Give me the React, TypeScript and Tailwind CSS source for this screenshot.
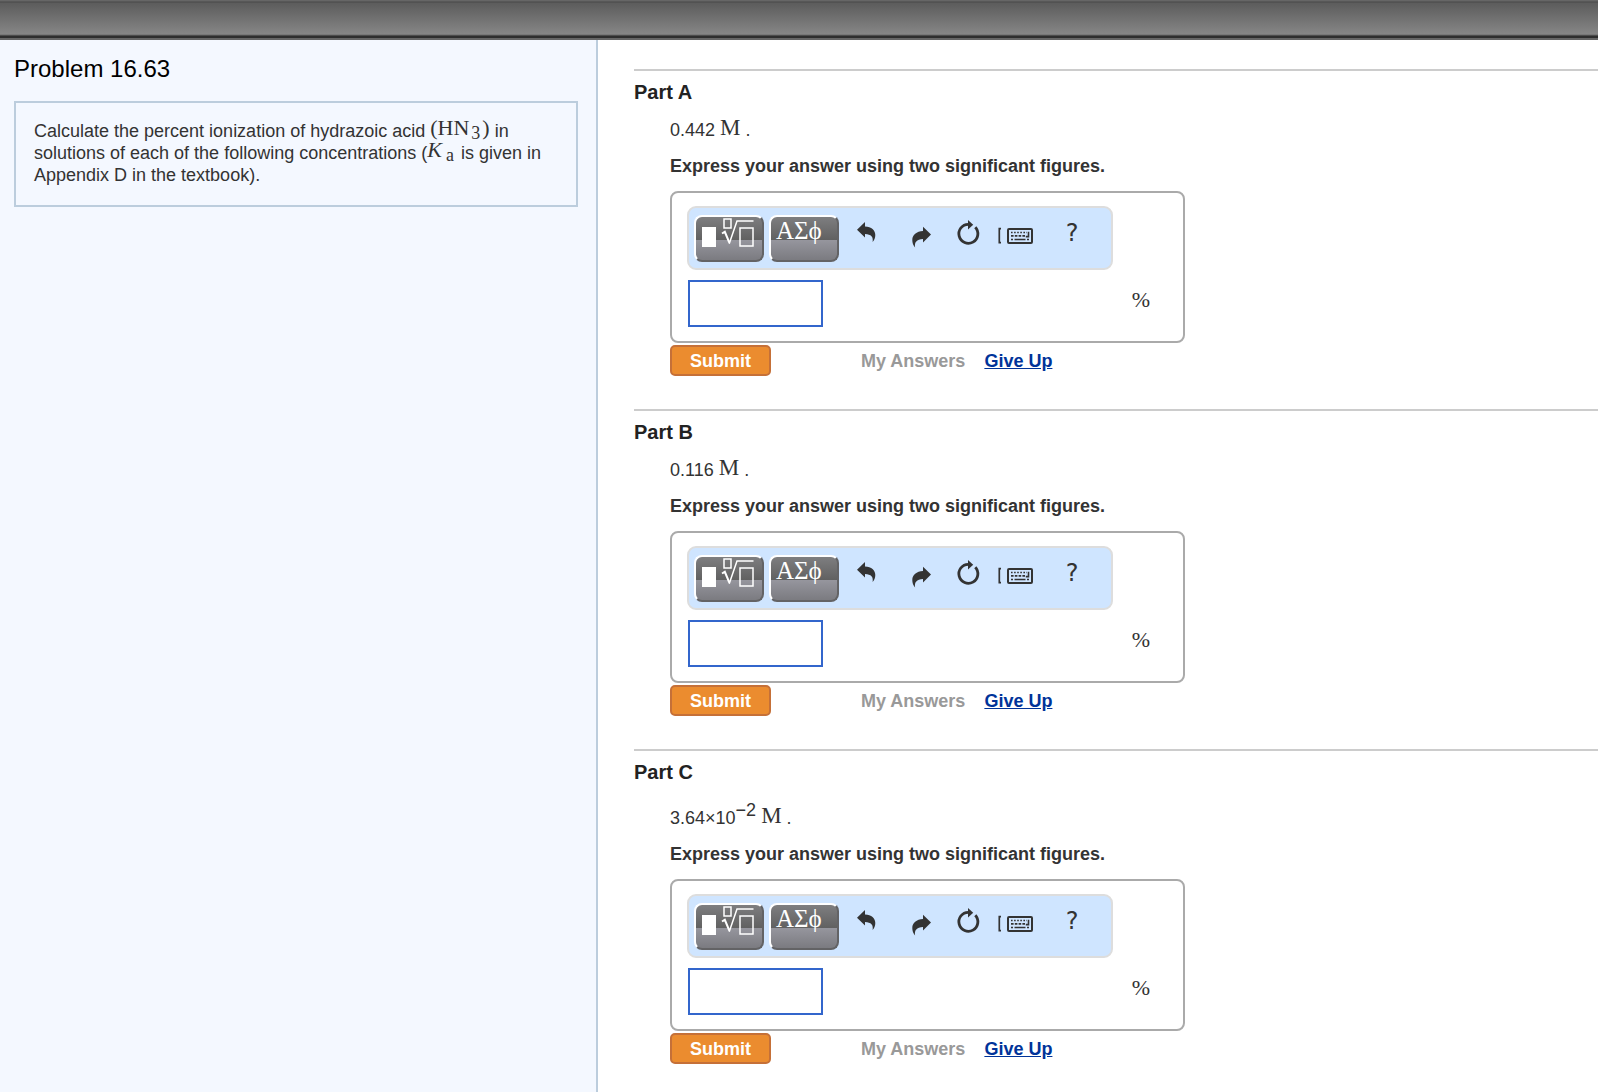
import type { ReactNode } from "react";

type Part = {
  id: string;
  value: ReactNode;
};

const parts: Part[] = [
  { id: "A", value: "0.442" },
  { id: "B", value: "0.116" },
  {
    id: "C",
    value: (
      <>
        3.64×10
        <sup className="static align-[8px] text-[18px] leading-6">−2</sup>
      </>
    ),
  },
];

function UndoIcon() {
  return (
    <svg width="28" height="36" viewBox="0 0 28 36" fill="#333" aria-hidden="true">
      <path d="M5 14.7 13 7v4.400c6.500.2 10.300 3.600 10.300 8.500 0 2.600-.9 5-2.700 7.200.9-5-1.300-7.800-7.600-8v3.500z" />
    </svg>
  );
}

function RedoIcon() {
  return (
    <svg width="28" height="36" viewBox="0 0 28 36" fill="#333" aria-hidden="true">
      <path d="M23 19.600 15 11.700v4.400C8.500 16.400 4.300 20 4.300 24.900c0 2.700.8 5.200 2.800 7.500-.9-5.200 1.500-8.200 7.900-8.500v3.600z" />
    </svg>
  );
}

function ResetIcon() {
  return (
    <svg width="28" height="36" viewBox="0 0 28 36" aria-hidden="true">
      <path
        d="M21.300 12.300A9.500 9.500 0 1 1 14.300 9.300"
        fill="none"
        stroke="#333"
        strokeWidth="2.800"
      />
      <path d="M14 5v9.400l5.200-4.700z" fill="#333" />
    </svg>
  );
}

function KeyboardIcon() {
  return (
    <svg width="40" height="36" viewBox="0 0 40 36" fill="none" stroke="#333" aria-hidden="true">
      <path d="M5 13.700H3.300v14H5" strokeWidth="1.700" />
      <rect x="12" y="14" width="24" height="14" rx="1" strokeWidth="2" />
      <path d="M15 17.500h16" strokeWidth="1.600" strokeDasharray="1.600 1.500" />
      <path d="M15 20.800h15" strokeWidth="1.800" strokeDasharray="2.600 1.200" />
      <path d="M15 24.500h2M18.500 24.500h11M31 24.500h2" strokeWidth="1.700" />
      <path d="M32.500 16.700v4.900h-2.700" strokeWidth="1.600" />
    </svg>
  );
}

function TemplateIcon() {
  return (
    <svg width="66" height="36" viewBox="0 0 66 36" fill="none" stroke="#fff" aria-hidden="true">
      <rect x="6" y="10" width="14" height="20" fill="#fff" stroke="none" />
      <rect x="28" y="2" width="7" height="9" strokeWidth="1.500" />
      <path d="m26 16.500 2.800-1.700 4.500 10.700" strokeWidth="2" />
      <path d="m33.200 26.700 7.800-22.700h16.500" strokeWidth="1.500" />
      <rect x="44" y="11" width="13" height="18" strokeWidth="1.500" />
    </svg>
  );
}

const keyClass =
  "h-[47px] w-[70px] overflow-hidden rounded-lg border-2 border-t-white border-l-white border-r-[#636365] border-b-[#636365] bg-[linear-gradient(#7e7e80_0%,#616161_53%,#96969e_53%,#7b7b80_100%)]";

function Toolbar() {
  return (
    <div className="flex h-16 w-[426px] items-start rounded-[9px] border-2 border-[#ddd] bg-[#cfe5ff] pt-[7px] pl-[5px]">
      <button type="button" aria-label="Templates" className={keyClass}>
        <span className="flex h-full items-start">
          <TemplateIcon />
        </span>
      </button>
      <button type="button" aria-label="Symbols" className={`${keyClass} ml-[5px]`}>
        <span className="flex h-full items-start pl-[5px] font-['Liberation_Serif',serif] text-[25px] leading-7 text-white">
          ΑΣϕ
        </span>
      </button>
      <button type="button" aria-label="Undo" className="ml-[13px]">
        <UndoIcon />
      </button>
      <button type="button" aria-label="Redo" className="ml-7">
        <RedoIcon />
      </button>
      <button type="button" aria-label="Reset" className="ml-[18px]">
        <ResetIcon />
      </button>
      <button type="button" aria-label="Keyboard" className="ml-[14px]">
        <KeyboardIcon />
      </button>
      <button
        type="button"
        aria-label="Help"
        className="ml-[22px] w-7 text-center font-['DejaVu_Sans',sans-serif] text-[24px] leading-9 text-[#333]"
      >
        ?
      </button>
    </div>
  );
}

function PartSection({ id, value }: Part) {
  return (
    <section className="border-t-2 border-[#ccc] pt-[9px] pb-[33px]">
      <h2 className="text-[20px] leading-6 font-bold text-[#222]">Part {id}</h2>
      <div className="pl-9">
        <p className="mt-[14px] leading-6">
          {value}{" "}
          <span className="align-[1px] font-['Liberation_Serif',serif] text-[23px] leading-4">
            M
          </span>{" "}
          .
        </p>
        <p className="mt-3 leading-6 font-bold">
          Express your answer using two significant figures.
        </p>
        <div className="mt-[13px] w-[515px] rounded-lg border-2 border-[#aaa] px-[15px] pt-[13px] pb-[14px]">
          <Toolbar />
          <div className="mt-[10px] flex items-start justify-between pr-[18px] pl-px">
            <input
              type="text"
              aria-label={`Answer for part ${id}`}
              className="h-[47px] w-[135px] border-2 border-[#36c] bg-white px-2 outline-none"
            />
            <span className="font-['Liberation_Serif',serif] text-[22px] leading-10">%</span>
          </div>
        </div>
        <div className="mt-0.5 flex items-start leading-8 font-bold">
          <button
            type="button"
            className="h-[31px] w-[101px] rounded-[5px] border-2 border-[#c57038] bg-[#eb8c2f] leading-6 text-white"
          >
            Submit
          </button>
          <span className="ml-[90px] h-[31px] text-[#999]">My Answers</span>
          <a href="#" className="ml-[19px] h-[31px] text-[#039] underline">
            Give Up
          </a>
        </div>
      </div>
    </section>
  );
}

export default function App() {
  return (
    <div className="flex h-screen flex-col overflow-hidden bg-white font-['Liberation_Sans',Arial,sans-serif] text-[18px] text-[#333]">
      <header className="h-10 shrink-0 border-b-2 border-[#666] bg-[linear-gradient(#666_0px,#666_1px,#484848_2px,#5c5c5c_3px,#868686_34px,#6a6a6a_35px,#2e2e2e_36px,#2e2e2e_38px)]" />
      <div className="flex min-h-0 flex-1">
        <aside className="w-[598px] shrink-0 border-r-2 border-[#bccddd] bg-[#f4f8ff] pt-[13px] pr-[18px] pl-[14px]">
          <h1 className="text-[24px] leading-8 text-black">Problem 16.63</h1>
          <div className="mt-4 border-2 border-[#bccddd] px-[18px] pt-[17px] pb-[19px] leading-[22px]">
            Calculate the percent ionization of hydrazoic acid{" "}
            <span className="align-[2px] font-['Liberation_Serif',serif] text-[22px] leading-3">
              (HN
              <sub className="static mx-0.5 align-[-4px] text-[18px]">3</sub>)
            </span>{" "}
            in solutions of each of the following concentrations (
            <span className="align-[2px] font-['Liberation_Serif',serif] text-[22px] leading-3">
              <i>K</i>
              <sub className="static mr-0.5 ml-1 align-[-4px] text-[18px]">a</sub>
            </span>{" "}
            is given in Appendix D in the textbook).
          </div>
        </aside>
        <main className="min-w-0 flex-1 pt-[29px] pl-9">
          {parts.map((part) => (
            <PartSection key={part.id} {...part} />
          ))}
        </main>
      </div>
    </div>
  );
}
